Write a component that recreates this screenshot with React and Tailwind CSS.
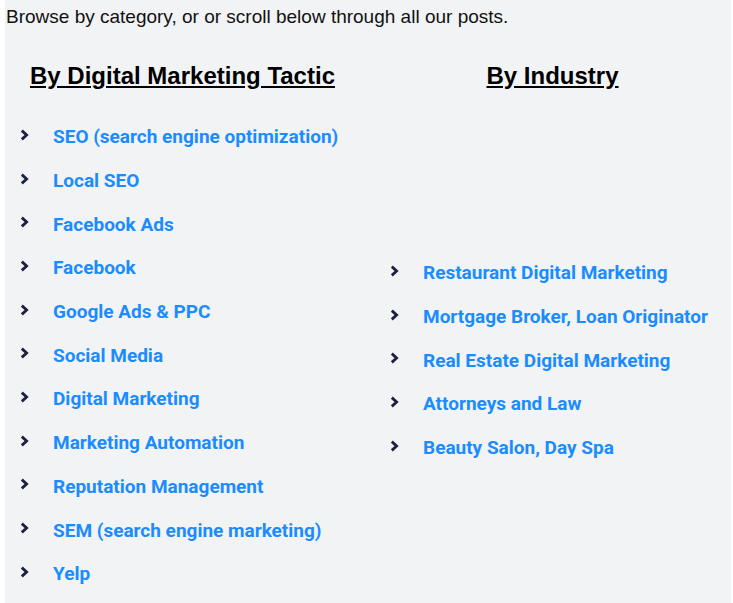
import React from 'react';

const tactics = [
  'SEO (search engine optimization)',
  'Local SEO',
  'Facebook Ads',
  'Facebook',
  'Google Ads & PPC',
  'Social Media',
  'Digital Marketing',
  'Marketing Automation',
  'Reputation Management',
  'SEM (search engine marketing)',
  'Yelp',
];

const industries = [
  'Restaurant Digital Marketing',
  'Mortgage Broker, Loan Originator',
  'Real Estate Digital Marketing',
  'Attorneys and Law',
  'Beauty Salon, Day Spa',
];

const Chevron = () => (
  <svg width="9" height="12" viewBox="0 0 9 12" className="shrink-0">
    <path d="M1.8 1.6 L6.6 6 L1.8 10.4" fill="none" stroke="#1c1f3f" strokeWidth="2.8" strokeLinejoin="miter" />
  </svg>
);

const LinkList = ({ items, className = '' }) => (
  <ul className={`flex flex-col ${className}`}>
    {items.map((item) => (
      <li key={item} className="flex items-center h-[43.7px]">
        <span className="w-[33px] flex items-center -mt-[4px]">
          <Chevron />
        </span>
        <a className="text-[#1a8cff] font-bold text-[19px] font-['Roboto',sans-serif] leading-none">{item}</a>
      </li>
    ))}
  </ul>
);

export default function App() {
  return (
    <div className="bg-white w-[733px] h-[603px] overflow-hidden font-['Liberation_Sans',Arial,sans-serif]">
      <div className="ml-[5px] w-[726px] h-full bg-[#f2f3f5]">
        <p className="text-[19px] leading-[33px] text-[#111] pl-[1px]">
          Browse by category, or or scroll below through all our posts.
        </p>
        <div className="grid grid-cols-[365px_361px]">
          <div className="flex flex-col pl-[15px]">
            <h2 className="text-[24px] font-bold underline text-black text-center pr-[25px] mt-[28px] leading-[30px]">
              By Digital Marketing Tactic
            </h2>
            <LinkList items={tactics} className="mt-[24px]" />
          </div>
          <div className="flex flex-col">
            <h2 className="text-[24px] font-bold underline text-black text-center mt-[28px] leading-[30px] pl-[4px]">
              By Industry
            </h2>
            <LinkList items={industries} className="mt-[160px] pl-[20px]" />
          </div>
        </div>
      </div>
    </div>
  );
}
